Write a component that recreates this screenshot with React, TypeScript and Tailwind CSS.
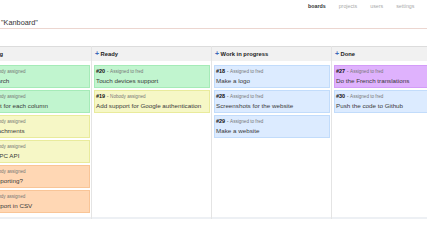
type Color = 'green' | 'yellow' | 'blue' | 'purple' | 'orange';

interface Task {
  id: number;
  title: string;
  assignee?: string;
  color: Color;
}

interface Column {
  name: string;
  tasks: Task[];
}

const colorClasses: Record<Color, string> = {
  green: 'bg-[#c1f5cf] border-[#a5ebb8]',
  yellow: 'bg-[#f6f7c6] border-[#e9eb9c]',
  blue: 'bg-[#dcebff] border-[#c2dcfb]',
  purple: 'bg-[#dfb2fd] border-[#d39cf8]',
  orange: 'bg-[#ffd7b4] border-[#f9c597]',
};

const columns: Column[] = [
  {
    name: 'Backlog',
    tasks: [
      { id: 12, title: 'Task search', color: 'green' },
      { id: 14, title: 'Task limit for each column', color: 'green' },
      { id: 15, title: 'Task attachments', color: 'yellow' },
      { id: 16, title: 'JSON-RPC API', color: 'yellow' },
      { id: 17, title: 'Tasks importing?', color: 'orange' },
      { id: 11, title: 'Tasks export in CSV', color: 'orange' },
    ],
  },
  {
    name: 'Ready',
    tasks: [
      { id: 20, title: 'Touch devices support', assignee: 'fred', color: 'green' },
      { id: 19, title: 'Add support for Google authentication', color: 'yellow' },
    ],
  },
  {
    name: 'Work in progress',
    tasks: [
      { id: 18, title: 'Make a logo', assignee: 'fred', color: 'blue' },
      { id: 28, title: 'Screenshots for the website', assignee: 'fred', color: 'blue' },
      { id: 29, title: 'Make a website', assignee: 'fred', color: 'blue' },
    ],
  },
  {
    name: 'Done',
    tasks: [
      { id: 27, title: 'Do the French translations', assignee: 'fred', color: 'purple' },
      { id: 30, title: 'Push the code to Github', assignee: 'fred', color: 'blue' },
    ],
  },
];

function TaskCard({ task }: { task: Task }) {
  return (
    <div
      className={`h-[22.5px] mb-[2.5px] border pt-[2px] pl-[1px] overflow-hidden whitespace-nowrap ${colorClasses[task.color]}`}
    >
      <div className="leading-[7.5px] text-[4.6px] text-[#777]">
        <span className="text-[5.5px] font-bold text-[#111]">#{task.id}</span>
        <span className="text-[5.5px] text-[#555]"> - </span>
        {task.assignee ? `Assigned to ${task.assignee}` : 'Nobody assigned'}
      </div>
      <div className="mt-[0.5px] text-[6.25px] leading-[10px] text-[#3a3a3a]">{task.title}</div>
    </div>
  );
}

export default function App() {
  return (
    <div className="w-[427px] h-[240px] overflow-hidden bg-white font-['Liberation_Sans',Arial,sans-serif]">
      {/* Top menu */}
      <div className="h-[13px] flex items-center gap-[13px] pl-[308px] text-[5.3px] whitespace-nowrap text-[#aaa]">
        <span className="font-bold text-[#333]">boards</span>
        <span>projects</span>
        <span>users</span>
        <span>settings</span>
        <span>logout</span>
      </div>

      {/* Title */}
      <div className="pt-[5px] pl-[1px] border-b border-[#ecd6d0]">
        <h1 className="text-[7.3px] leading-[10px] text-[#333] whitespace-nowrap">"Kanboard"</h1>
      </div>

      {/* Board */}
      <div className="mt-[17px] ml-[-28px] flex">
        {columns.map((col) => (
          <div key={col.name} className="w-[120px] shrink-0 border-r border-[#e4e4e4]">
            <div className="h-[15px] bg-[#f1f1f1] border-t border-[#dcdcdc] px-[3px] flex items-center gap-[1.5px] text-[5.8px] font-bold text-[#222] whitespace-nowrap">
              <span className="text-[7px] leading-[8px] text-[#3d68b8]">+</span>
              <span>{col.name}</span>
            </div>
            <div className="h-[158px] pt-[4px] pl-[2px] pr-[1px] border-b-2 border-[#edf0f4]">
              {col.tasks.map((t) => (
                <TaskCard key={t.id} task={t} />
              ))}
            </div>
          </div>
        ))}
      </div>
    </div>
  );
}
